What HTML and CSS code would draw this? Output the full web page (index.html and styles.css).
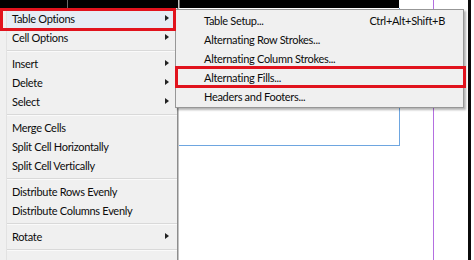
FILE: index.html
```html
<!DOCTYPE html>
<html lang="en">
<head>
  <meta charset="UTF-8">
  <title>Table Options menu</title>
  <link rel="stylesheet" href="styles.css">
</head>
<body>

  <div class="app">
    <div class="menu-col">
      <div class="ruler"><span class="tick"></span></div>
      <ul class="menu">
        <li class="item has-sub active marked">Table Options</li>
        <li class="item has-sub">Cell Options</li>
        <li class="sep"></li>
        <li class="item has-sub">Insert</li>
        <li class="item has-sub">Delete</li>
        <li class="item has-sub">Select</li>
        <li class="sep"></li>
        <li class="item">Merge Cells</li>
        <li class="item">Split Cell Horizontally</li>
        <li class="item">Split Cell Vertically</li>
        <li class="sep"></li>
        <li class="item">Distribute Rows Evenly</li>
        <li class="item">Distribute Columns Evenly</li>
        <li class="sep"></li>
        <li class="item has-sub">Rotate</li>
        <li class="sep"></li>
        <li class="item"></li>
      </ul>
    </div>

    <div class="doc">
      <div class="spread">
        <div class="ruler ruler-doc"></div>
        <div class="frame"></div>
      </div>
      <div class="guide"></div>
      <div class="edge"></div>
    </div>

    <!-- flyout for Table Options -->
    <ul class="submenu">
      <li class="item"><span>Table Setup...</span><span class="keys">Ctrl+Alt+Shift+B</span></li>
      <li class="item">Alternating Row Strokes...</li>
      <li class="item">Alternating Column Strokes...</li>
      <li class="item marked">Alternating Fills...</li>
      <li class="item">Headers and Footers...</li>
    </ul>
  </div>

</body>
</html>
```

FILE: styles.css
```css
* { margin: 0; padding: 0; box-sizing: border-box; }
body {
  font-family: 'Lato', 'Open Sans', sans-serif;
  font-size: 11px;
  letter-spacing: -0.3px;
  color: #0c0c0c;
  background: #fff;
  overflow: hidden;
}
ul { list-style: none; }

.app {
  position: relative;
  display: flex;
  width: 474px;
  height: 260px;
  overflow: hidden;
}

/* rulers along the top */
.ruler {
  height: 8px;
  background: #000;
  position: relative;
}
.ruler .tick {
  display: block;
  width: 1px;
  height: 8px;
  margin-left: 67px;
  background: #6a6a6a;
}
.ruler-doc {
  width: 220px;
  border-left: 1px solid #6a6a6a;
}

/* main context menu */
.menu-col {
  width: 178px;
  display: flex;
  flex-direction: column;
}
.menu {
  flex: 1;
  background: #f0f0f0;
  border-right: 1px solid #8d8d8d;
  padding: 1px 0 0 6px;
}
.menu .item {
  position: relative;
  height: 19px;
  line-height: 19px;
  padding-left: 5px;
  border-left: 1px solid #e2e2e2;
}
.menu .sep {
  height: 7px;
  border-left: 1px solid #e2e2e2;
  position: relative;
}
.menu .sep::before {
  content: "";
  position: absolute;
  left: 0;
  right: 0;
  top: 3px;
  border-top: 1px solid #d9d9d9;
  border-bottom: 1px solid #fafafa;
}
.has-sub::after {
  content: "";
  position: absolute;
  right: 8px;
  top: 6px;
  border-left: 4px solid #222;
  border-top: 3.5px solid transparent;
  border-bottom: 3.5px solid transparent;
}
.menu .active {
  background: #e6ecf4;
}

/* red call-out boxes */
.marked::before {
  content: "";
  position: absolute;
  border: 3px solid #e1131d;
  z-index: 2;
}
.menu .marked::before {
  left: -7px;
  right: 1px;
  top: -1px;
  bottom: -3px;
}

/* document side */
.doc {
  flex: 1;
  display: flex;
  background: #fff;
}
.spread {
  width: 255px;
  border-left: 1px solid #c4c4c4;
}
.frame {
  width: 221px;
  height: 138px;
  border-right: 1px solid #6ea6e0;
  border-bottom: 1px solid #6ea6e0;
}
.guide {
  width: 1px;
  background: #b46fe0;
}
.edge {
  width: 3px;
  margin-left: 34px;
  background: #0b0b0b;
}

/* flyout */
.submenu {
  position: absolute;
  left: 175px;
  top: 9px;
  width: 289px;
  background: #f0f0f0;
  border: 1px solid #979797;
  box-shadow: 2px 2px 2px rgba(0, 0, 0, 0.3);
  padding: 1px 0 1px 0;
  z-index: 1;
}
.submenu .item {
  position: relative;
  display: flex;
  justify-content: space-between;
  height: 19px;
  line-height: 19px;
  padding: 0 18px 0 28px;
}
.submenu .marked::before {
  left: -1px;
  right: -3px;
  top: -2px;
  bottom: -1px;
}
```
